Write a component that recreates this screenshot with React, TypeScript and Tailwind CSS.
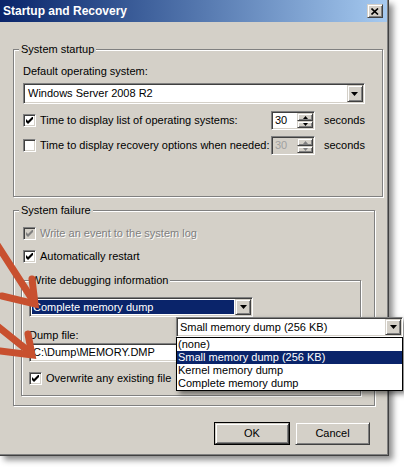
import React from 'react';

const sunken =
  'border border-t-[#808080] border-l-[#808080] border-r-white border-b-white shadow-[inset_1px_1px_0_#404040,inset_-1px_-1px_0_#d4d0c8]';
const raised =
  'border border-t-[#d4d0c8] border-l-[#d4d0c8] border-r-[#404040] border-b-[#404040] shadow-[inset_1px_1px_0_#fff,inset_-1px_-1px_0_#808080] bg-[#d4d0c8]';

const DownArrow = ({ color = '#000' }: { color?: string }) => (
  <svg width="7" height="4" viewBox="0 0 7 4">
    <polygon points="0,0 7,0 3.5,4" fill={color} />
  </svg>
);

const DropButton = () => (
  <div className={`${raised} w-[16px] h-full flex items-center justify-center`}>
    <DownArrow />
  </div>
);

const CheckBox = ({ checked, disabled }: { checked: boolean; disabled?: boolean }) => (
  <div
    className={`${sunken} w-[13px] h-[13px] shrink-0 flex items-center justify-center ${
      disabled ? 'bg-[#d4d0c8]' : 'bg-white'
    }`}
  >
    {checked && (
      <svg width="7" height="7" viewBox="0 0 7 7">
        <polygon points="0,2 2,4 6,0 7,0 7,2 2,7 0,5" fill={disabled ? '#808080' : '#000'} />
      </svg>
    )}
  </div>
);

const Spin = ({ value, disabled }: { value: string; disabled?: boolean }) => (
  <div className={`${sunken} w-[44px] h-[19px] p-[1px] flex ${disabled ? 'bg-[#d4d0c8]' : 'bg-white'}`}>
    <div className={`flex-1 pl-[2px] leading-[15px] ${disabled ? 'text-[#a0a0a0]' : 'text-black'}`}>{value}</div>
    <div className="w-[16px] flex flex-col">
      <div className={`${raised} h-[8px] flex items-center justify-center`}>
        <svg width="5" height="3" viewBox="0 0 5 3">
          <polygon points="2.5,0 5,3 0,3" fill={disabled ? '#808080' : '#000'} />
        </svg>
      </div>
      <div className={`${raised} h-[7px] flex items-center justify-center`}>
        <svg width="5" height="3" viewBox="0 0 5 3">
          <polygon points="0,0 5,0 2.5,3" fill={disabled ? '#808080' : '#000'} />
        </svg>
      </div>
    </div>
  </div>
);

const groove = 'border border-[#808080] shadow-[inset_1px_1px_0_#fff,1px_1px_0_#fff]';

export default function App() {
  return (
    <div className="relative w-[404px] h-[472px] bg-white overflow-hidden font-['Liberation_Sans',sans-serif] text-[11px] text-black">
      <div className="w-[389px] h-[456px] bg-[#d4d0c8] border-r border-b border-[#404040] shadow-[inset_-1px_-1px_0_#808080,4px_4px_6px_rgba(0,0,0,0.45)] flex flex-col">
        {/* title bar */}
        <div className="h-[22px] mr-[1px] bg-gradient-to-r from-[#0a246a] to-[#a6caf0] flex items-center justify-between pl-[3px] pr-[4px]">
          <span className="text-white font-bold text-[12px]">Startup and Recovery</span>
          <div className={`${raised} w-[16px] h-[14px] flex items-center justify-center`}>
            <svg width="8" height="7" viewBox="0 0 8 7">
              <path d="M0.5 0.5 L7 6.5 M7 0.5 L0.5 6.5" stroke="#000" strokeWidth="1.6" />
            </svg>
          </div>
        </div>

        {/* System startup */}
        <fieldset className={`${groove} ml-[13px] mt-[21px] w-[362px] h-[154px] pl-[9px] pr-[17px]`}>
          <legend className="ml-[-4px] px-[2px] leading-[13px] bg-[#d4d0c8]">System startup</legend>
          <div className="mt-[9px] leading-[13px]">Default operating system:</div>
          <div className={`${sunken} mt-[5px] h-[21px] p-[1px] flex bg-white`}>
            <div className="flex-1 pl-[3px] leading-[17px]">Windows Server 2008 R2</div>
            <DropButton />
          </div>
          <div className="mt-[7px] h-[19px] flex items-center">
            <CheckBox checked />
            <div className="ml-[4px] w-[231px] whitespace-nowrap">Time to display list of operating systems:</div>
            <Spin value="30" />
            <div className="ml-[9px]">seconds</div>
          </div>
          <div className="mt-[6px] h-[19px] flex items-center">
            <CheckBox checked={false} />
            <div className="ml-[4px] w-[231px] whitespace-nowrap">Time to display recovery options when needed:</div>
            <Spin value="30" disabled />
            <div className="ml-[9px]">seconds</div>
          </div>
        </fieldset>

        {/* System failure */}
        <fieldset className={`${groove} ml-[13px] mt-[7px] w-[362px] h-[202px] pl-[7px]`}>
          <legend className="ml-[-2px] px-[2px] leading-[13px] bg-[#d4d0c8]">System failure</legend>
          <div className="ml-[2px] mt-[10px] h-[13px] flex items-center">
            <CheckBox checked disabled />
            <div className="ml-[4px] text-[#808080] [text-shadow:1px_1px_0_#fff]">Write an event to the system log</div>
          </div>
          <div className="ml-[2px] mt-[10px] h-[13px] flex items-center">
            <CheckBox checked />
            <div className="ml-[4px]">Automatically restart</div>
          </div>

          <fieldset className={`${groove} mt-[11px] w-[340px] h-[122px] pl-[7px]`}>
            <legend className="px-[2px] leading-[13px] bg-[#d4d0c8]">Write debugging information</legend>
            <div className={`${sunken} mt-[10px] w-[224px] h-[20px] p-[1px] flex bg-white`}>
              <div className="flex-1 m-[1px] bg-[#0a246a] text-white pl-[1px] leading-[14px]">Complete memory dump</div>
              <DropButton />
            </div>
            <div className="mt-[12px] leading-[13px]">Dump file:</div>
            <div className={`${sunken} mt-[1px] w-[323px] h-[19px] bg-white pl-[3px] leading-[17px]`}>
              C:\Dump\MEMORY.DMP
            </div>
            <div className="mt-[10px] h-[13px] flex items-center">
              <CheckBox checked />
              <div className="ml-[4px]">Overwrite any existing file</div>
            </div>
          </fieldset>
        </fieldset>

        {/* buttons */}
        <div className="mt-[16px] flex justify-end gap-[5px] pr-[18px]">
          <div className="w-[76px] h-[23px] border border-black">
            <div className={`${raised} h-full flex items-center justify-center`}>OK</div>
          </div>
          <div className={`${raised} w-[75px] h-[23px] flex items-center justify-center`}>Cancel</div>
        </div>
      </div>

      {/* dropdown call-out */}
      <div className="absolute left-[176px] top-[317px] w-[227px] shadow-[3px_3px_5px_rgba(0,0,0,0.5)]">
        <div className={`${sunken} h-[20px] p-[1px] flex bg-white`}>
          <div className="flex-1 pl-[2px] leading-[16px]">Small memory dump (256 KB)</div>
          <DropButton />
        </div>
        <div className="border border-black bg-white">
          <div className="h-[13px] leading-[13px] pl-[1px]">(none)</div>
          <div className="h-[13px] leading-[13px] pl-[1px] bg-[#0a246a] text-white">Small memory dump (256 KB)</div>
          <div className="h-[13px] leading-[13px] pl-[1px]">Kernel memory dump</div>
          <div className="h-[13px] leading-[13px] pl-[1px]">Complete memory dump</div>
        </div>
      </div>

      {/* red arrows */}
      <svg className="absolute left-0 top-0 pointer-events-none" width="404" height="472" viewBox="0 0 404 472">
        <g stroke="#c8502f" strokeWidth="7" fill="none" strokeLinejoin="miter" strokeLinecap="round">
          <path d="M-4 243 L34 302" />
          <path d="M32 279 L35 304 L2 296" />
          <path d="M-4 325 L31 353" />
          <path d="M28 334 L32 355 L0 351" />
        </g>
      </svg>
    </div>
  );
}
